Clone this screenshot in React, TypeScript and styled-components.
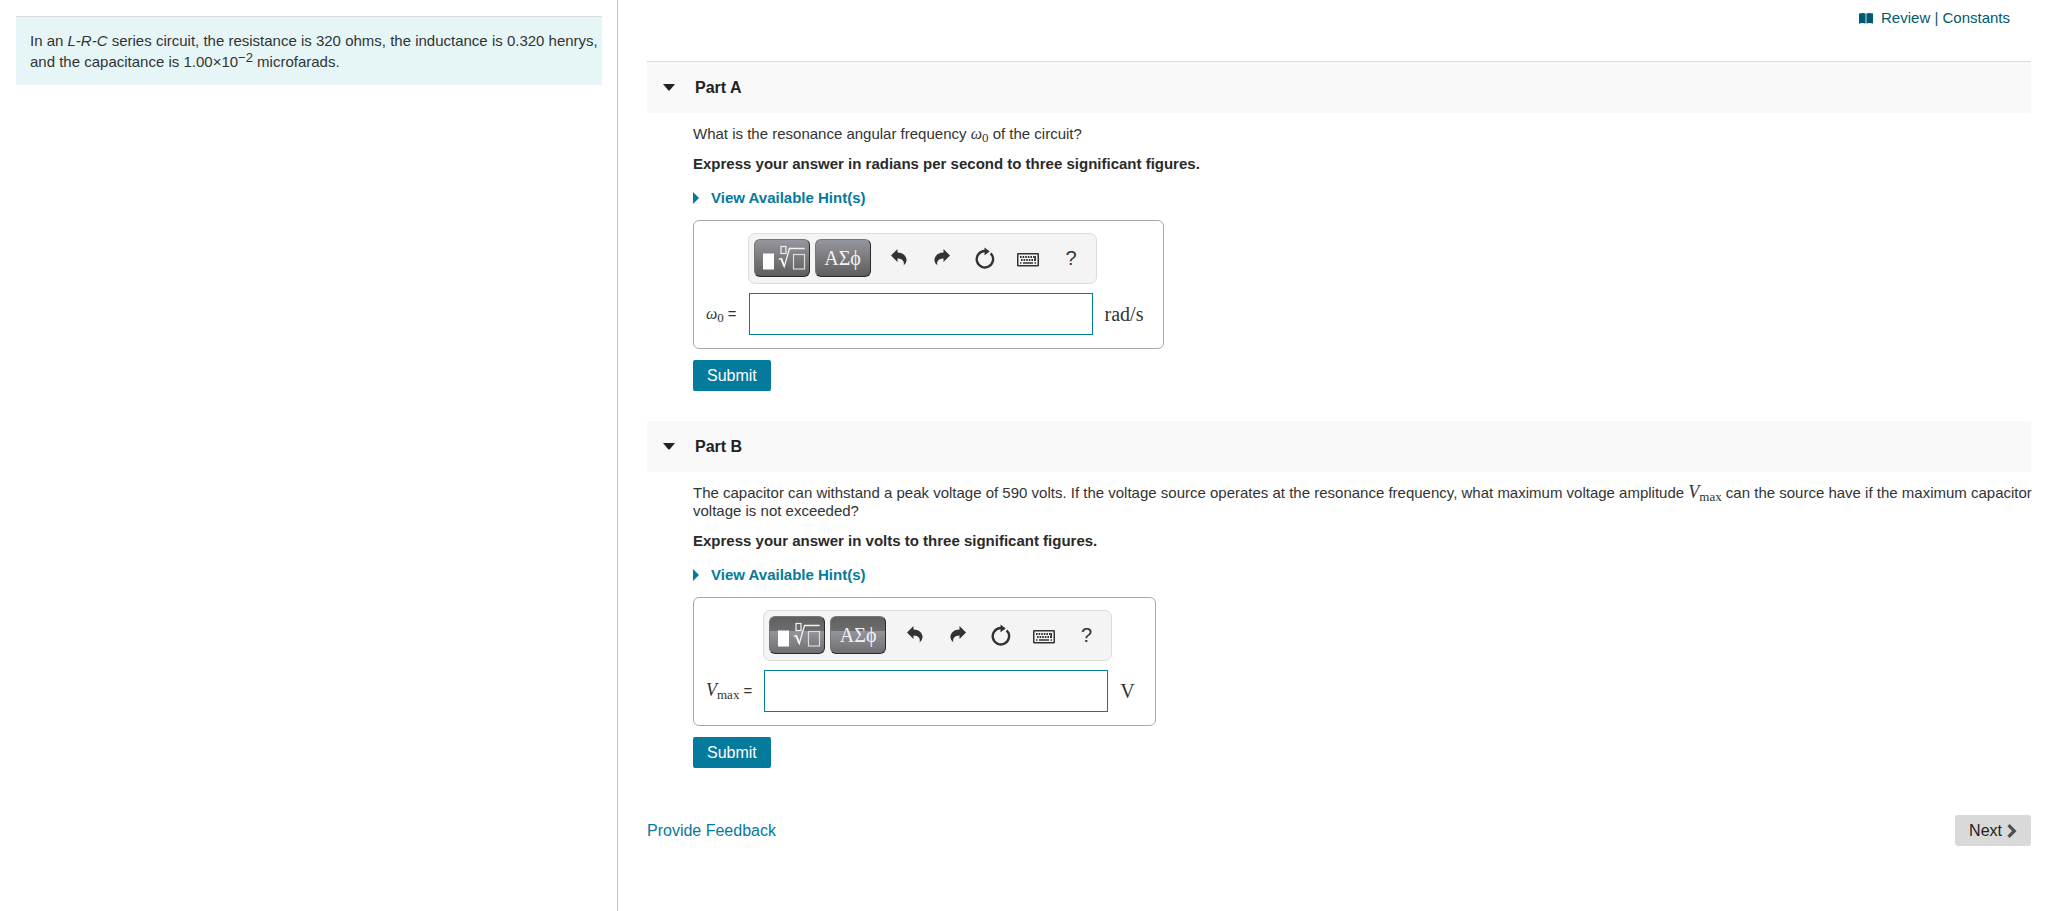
import React from "react";
import styled, { createGlobalStyle, css } from "styled-components";

const sans = `"Liberation Sans", Arial, sans-serif`;
const serif = `"Liberation Serif", "Times New Roman", serif`;

const GlobalStyle = createGlobalStyle`
  *, *::before, *::after { box-sizing: border-box; }
  body {
    margin: 0;
    background: #fff;
    color: #333;
    font: 15px/18px ${sans};
  }
  a { color: inherit; text-decoration: none; }
  button { border: 0; padding: 0; background: none; color: inherit; font: inherit; cursor: pointer; }
  h2, p { margin: 0; }
  svg { display: block; flex: none; }
`;

const Page = styled.div`
  display: grid;
  grid-template-columns: 617px minmax(0, 1fr);
  min-height: 100vh;
`;

const Sidebar = styled.aside`
  padding: 16px 15px 16px 16px;
`;

const Intro = styled.p`
  padding: 13px 4px 13px 14px;
  border-top: 1px solid #dcdcdc;
  background: #e6f6f7;
  line-height: 21px;
`;

const Sup = styled.sup`
  font-size: 13px;
  line-height: 0;
  vertical-align: 5px;
`;

const Main = styled.main`
  padding: 0 31px 0 29px;
  border-left: 1px solid #bcc8d4;
`;

const TopLinks = styled.nav`
  display: flex;
  justify-content: flex-end;
  align-items: center;
  height: 61px;
  padding: 0 21px 25px 0;
  color: #005a70;
  white-space: pre;
`;

const ReviewLink = styled.a`
  display: flex;
  align-items: center;
  gap: 8px;
`;

const PartHeader = styled.h2<{ $ruled?: boolean }>`
  height: 51px;
  background: #f9f9f9;
  ${(p) =>
    p.$ruled &&
    css`
      height: 52px;
      border-top: 1px solid #dcdcdc;
    `}
`;

const Toggle = styled.button`
  display: flex;
  align-items: center;
  gap: 20px;
  height: 100%;
  padding: 0 16px;
  color: #222;
  font-size: 16px;
  font-weight: bold;
`;

const PartBody = styled.div`
  display: flex;
  flex-direction: column;
  align-items: flex-start;
  padding: 12px 0 30px 46px;
`;

const Question = styled.p`
  margin-right: -6px;
`;

const Instruction = styled.p`
  margin-top: 12px;
  color: #2a2a2a;
  font-weight: bold;
`;

const HintButton = styled.button`
  display: flex;
  align-items: center;
  gap: 12px;
  margin-top: 16px;
  color: #047a9c;
  font-weight: bold;
`;

const AnswerBox = styled.div`
  display: grid;
  grid-template-columns: auto 346px auto;
  column-gap: 11px;
  row-gap: 9px;
  align-items: center;
  margin: 13px 0 11px;
  padding: 12px 20px 13px 12px;
  border: 1px solid #a9a9a9;
  border-radius: 6px;
`;

const Toolbar = styled.div`
  display: flex;
  align-items: center;
  grid-column: 2 / 4;
  justify-self: start;
  height: 51px;
  padding: 0 3px 2px 5px;
  border: 1px solid #dcdcdc;
  border-radius: 7px;
  background: #f4f4f4;
`;

const PaletteButton = styled.button<{ $split?: boolean }>`
  display: grid;
  place-items: center;
  width: 56px;
  height: 38px;
  margin-right: 5px;
  border: 1px solid;
  border-color: #777 #2a2a2a #2a2a2a #777;
  border-radius: 6px;
  background: ${(p) =>
    p.$split
      ? "linear-gradient(#606060, #6c6c6c 38%, #94949c 39%, #6e6e72)"
      : "linear-gradient(#96969e, #5e5e5e)"};
  color: #f2f2f2;
  font: 20px/24px ${serif};
`;

const IconButton = styled.button`
  display: grid;
  place-items: center;
  width: 43px;
  height: 38px;
  color: #333;
  font-size: 20px;
`;

const Spacer = styled.span`
  width: 2px;
`;

const MathText = styled.span<{ $small?: boolean }>`
  font: ${(p) => (p.$small ? 16 : 18)}px/0 ${serif};

  sub {
    font-size: 13px;
    vertical-align: -3px;
  }
`;

const AnswerLabel = styled.label`
  display: flex;
  justify-content: space-between;
  gap: 4px;
  min-width: 30px;
  white-space: nowrap;
`;

const AnswerInput = styled.input`
  width: 344px;
  height: 42px;
  margin: 0 1px;
  padding: 0 8px;
  border: 1px solid #047a9c;
  border-radius: 0;
  background: #fff;
  font: 18px ${serif};
`;

const Unit = styled.span`
  font: 20px/24px ${serif};
`;

const Submit = styled.button`
  height: 31px;
  padding: 0 14px;
  border-radius: 2px;
  background: #047a9c;
  color: #fff;
  font-size: 16px;
`;

const Footer = styled.footer`
  display: flex;
  align-items: center;
  justify-content: space-between;
  padding: 17px 0 16px;
  font-size: 16px;
`;

const FeedbackLink = styled.a`
  color: #047a9c;
`;

const NextButton = styled.button`
  display: flex;
  align-items: center;
  gap: 5px;
  height: 31px;
  padding: 0 14px;
  border-radius: 3px;
  background: #d9d9d9;
  color: #222;
`;

const BookIcon = () => (
  <svg width="14" height="11" viewBox="0 0 14 11" fill="currentColor">
    <path d="M0 .6Q3.800-.4 6.600.6V10.600Q3.800 9.600 0 10.600ZM7.400.6Q10.200-.4 14 .6V10.600Q10.200 9.600 7.400 10.600Z" />
  </svg>
);

const CaretDown = () => (
  <svg width="12" height="7" viewBox="0 0 12 7" fill="currentColor">
    <path d="M0 0H12L7 6Q6 7 5 6Z" />
  </svg>
);

const CaretRight = () => (
  <svg width="6" height="12" viewBox="0 0 6 12" fill="currentColor">
    <path d="M0 0L6 6L0 12Z" />
  </svg>
);

const TemplateIcon = () => (
  <svg width="54" height="36" viewBox="1 1 54 36" fill="none" stroke="#f2f2f2">
    <rect x="9" y="14.500" width="11" height="16" fill="#fff" stroke="none" />
    <rect x="27" y="7.500" width="5" height="7" strokeWidth="1.200" />
    <path d="M24.700 20.300L27.200 19.500L30.300 27.500L35.500 9.500H50.700" strokeWidth="1.300" />
    <path d="M27.200 19.500L30.300 27.500" strokeWidth="2" />
    <rect x="39.500" y="15.500" width="11" height="14.500" stroke="#ddd" strokeWidth="1.200" />
  </svg>
);

const ArrowPath = "M0 6.500L6.500 0V3.600C12 3.600 15.500 7 15.600 11.200Q15.500 14 12.600 16.600C13.700 12.500 11.500 9.600 6.500 9.500V13Z";

const UndoIcon = () => (
  <svg width="16" height="17" viewBox="0 0 16 17" fill="currentColor">
    <path d={ArrowPath} />
  </svg>
);

const RedoIcon = () => (
  <svg width="16" height="17" viewBox="0 0 16 17" fill="currentColor">
    <path d={ArrowPath} transform="matrix(-1 0 0 1 16 0)" />
  </svg>
);

const ResetIcon = () => (
  <svg width="20" height="22" viewBox="0 0 20 22" fill="none" stroke="currentColor" strokeWidth="2.400">
    <path d="M15.600 6.300A8.200 8.200 0 1 1 10 4" />
    <path d="M9.500 .6L14.800 4.600L9.500 8.300Z" fill="currentColor" stroke="none" />
  </svg>
);

const KeyboardIcon = () => (
  <svg width="22" height="18" viewBox="0 0 22 18" fill="none" stroke="currentColor">
    <rect x=".75" y="4.750" width="20.500" height="12" rx=".5" strokeWidth="1.500" />
    <path d="M3 8H19M4 11H19" strokeWidth="2" strokeDasharray="1.600 1" />
    <path d="M18.200 7V12" strokeWidth="1.600" />
    <path d="M3 14H4.500M6 14H16M17.500 14H19" strokeWidth="1.500" />
  </svg>
);

const ChevronIcon = () => (
  <svg width="10" height="14" viewBox="0 0 10 14" fill="none" stroke="#505050" strokeWidth="3.200">
    <path d="M1.500 1.200L7.300 7L1.500 12.800" />
  </svg>
);

const Omega = () => (
  <MathText $small>
    <i>ω</i>
    <sub>0</sub>
  </MathText>
);

const VMax = () => (
  <MathText>
    <i>V</i>
    <sub>max</sub>
  </MathText>
);

interface PartProps {
  id: string;
  title: string;
  ruled?: boolean;
  splitPalette?: boolean;
  question: React.ReactNode;
  instruction: string;
  symbol: React.ReactNode;
  unit: string;
}

const Part = ({ id, title, ruled, splitPalette, question, instruction, symbol, unit }: PartProps) => (
  <section>
    <PartHeader $ruled={ruled}>
      <Toggle aria-expanded="true">
        <CaretDown />
        {title}
      </Toggle>
    </PartHeader>
    <PartBody>
      <Question>{question}</Question>
      <Instruction>{instruction}</Instruction>
      <HintButton>
        <CaretRight />
        View Available Hint(s)
      </HintButton>
      <AnswerBox>
        <Toolbar role="toolbar">
          <PaletteButton $split={splitPalette} aria-label="Templates">
            <TemplateIcon />
          </PaletteButton>
          <PaletteButton $split={splitPalette}>ΑΣϕ</PaletteButton>
          <Spacer />
          <IconButton aria-label="Undo"><UndoIcon /></IconButton>
          <IconButton aria-label="Redo"><RedoIcon /></IconButton>
          <IconButton aria-label="Reset"><ResetIcon /></IconButton>
          <IconButton aria-label="Keyboard shortcuts"><KeyboardIcon /></IconButton>
          <IconButton>?</IconButton>
        </Toolbar>
        <AnswerLabel htmlFor={id}>
          <span>{symbol}</span>
          <span>=</span>
        </AnswerLabel>
        <AnswerInput id={id} type="text" />
        <Unit>{unit}</Unit>
      </AnswerBox>
      <Submit>Submit</Submit>
    </PartBody>
  </section>
);

export default function App() {
  return (
    <>
      <GlobalStyle />
      <Page>
        <Sidebar>
          <Intro>
            In an <i>L-R-C</i> series circuit, the resistance is 320 ohms, the inductance is 0.320
            henrys, and the capacitance is 1.00×10<Sup>−2</Sup> microfarads.
          </Intro>
        </Sidebar>
        <Main>
          <TopLinks>
            <ReviewLink href="#review">
              <BookIcon />
              Review
            </ReviewLink>
            {" | "}
            <a href="#constants">Constants</a>
          </TopLinks>
          <Part
            id="answer-a"
            title="Part A"
            ruled
            question={<>What is the resonance angular frequency <Omega /> of the circuit?</>}
            instruction="Express your answer in radians per second to three significant figures."
            symbol={<Omega />}
            unit="rad/s"
          />
          <Part
            id="answer-b"
            title="Part B"
            splitPalette
            question={
              <>
                The capacitor can withstand a peak voltage of 590 volts. If the voltage source
                operates at the resonance frequency, what maximum voltage amplitude <VMax />{" "}
                can the source have if the maximum capacitor voltage is not exceeded?
              </>
            }
            instruction="Express your answer in volts to three significant figures."
            symbol={<VMax />}
            unit="V"
          />
          <Footer>
            <FeedbackLink href="#feedback">Provide Feedback</FeedbackLink>
            <NextButton>
              Next
              <ChevronIcon />
            </NextButton>
          </Footer>
        </Main>
      </Page>
    </>
  );
}
